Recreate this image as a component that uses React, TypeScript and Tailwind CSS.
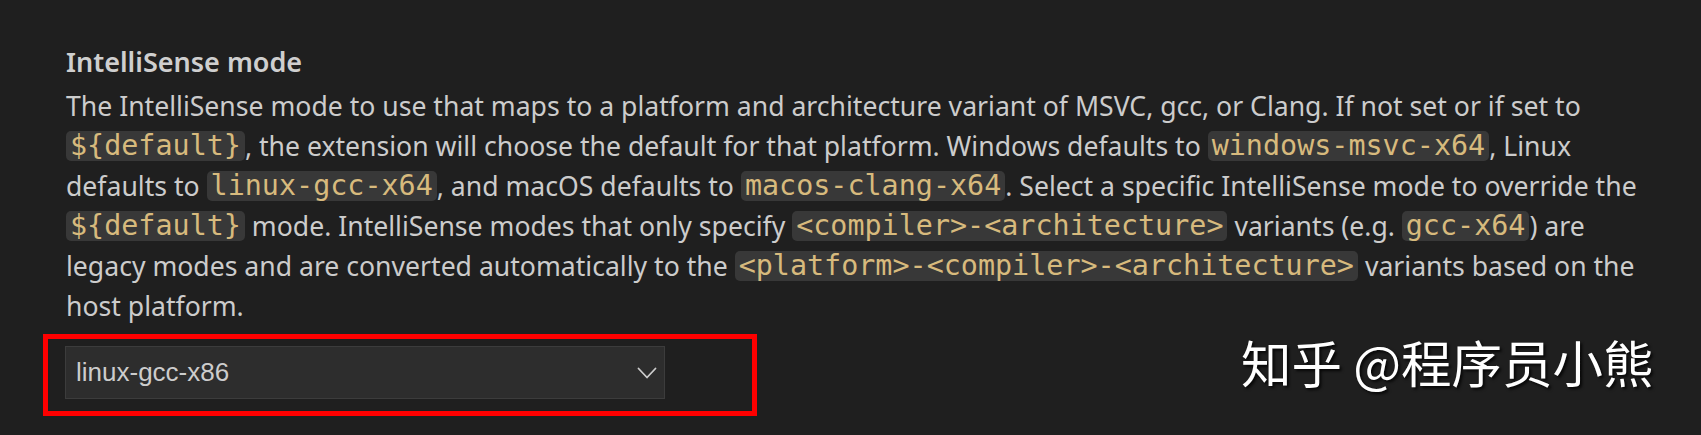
import React from 'react';

// Trozo de código en línea (estilo VS Code)
function Code({ children }: { children: React.ReactNode }) {
  return (
    <code className="inline-block rounded-[5px] bg-[#383838] px-[4px] leading-[30px] text-[#d7ba7d] font-['DejaVu_Sans_Mono',monospace] text-[28.4px] align-[1px]">
      {children}
    </code>
  );
}

export default function App() {
  return (
    <div className="relative w-[1701px] h-[435px] overflow-hidden bg-[#1f1f1f] text-[#cccccc] font-['Noto_Sans',sans-serif]">
      <div className="pl-[43px] pt-[42px]">
        <div className="ml-[23px] text-[27px] leading-[40px] font-semibold text-[#cfcfcf]">IntelliSense mode</div>
        <p className="ml-[23px] mt-[4px] text-[26.6px] leading-[40px] whitespace-nowrap">
          The IntelliSense mode to use that maps to a platform and architecture variant of MSVC, gcc, or Clang. If not set or if set to
          <br />
          <Code>{'${default}'}</Code>, the extension will choose the default for that platform. Windows defaults to <Code>windows-msvc-x64</Code>, Linux
          <br />
          defaults to <Code>linux-gcc-x64</Code>, and macOS defaults to <Code>macos-clang-x64</Code>. Select a specific IntelliSense mode to override the
          <br />
          <Code>{'${default}'}</Code> mode. IntelliSense modes that only specify <Code>{'<compiler>-<architecture>'}</Code> variants (e.g. <Code>gcc-x64</Code>) are
          <br />
          legacy modes and are converted automatically to the <Code>{'<platform>-<compiler>-<architecture>'}</Code> variants based on the
          <br />
          host platform.
        </p>

        {/* Recuadro rojo de anotación alrededor del selector */}
        <div className="mt-[8px] w-[714px] h-[82px] border-[5px] border-[#ff0000] pl-[17px] pt-[7px]">
          <div className="flex items-center justify-between w-[600px] h-[53px] bg-[#2d2d2d] border border-[#3c3c3c] pl-[10px] pr-[7px]">
            <span className="text-[26px] text-[#cccccc] font-['Liberation_Sans',Arial,sans-serif]">linux-gcc-x86</span>
            <svg width="20" height="12" viewBox="0 0 20 12" fill="none" stroke="#cccccc" strokeWidth="1.8" strokeLinecap="round" strokeLinejoin="round">
              <path d="M1.5 1.5l8.5 9 8.5-9" />
            </svg>
          </div>
        </div>
      </div>

      {/* Marca de agua */}
      <div className="absolute left-[1241px] top-[327px] text-[50.5px] leading-[68px] text-white font-['Noto_Sans_CJK_SC',sans-serif] [text-shadow:2px_2px_3px_rgba(0,0,0,0.8)]">
        知乎 @程序员小熊
      </div>
    </div>
  );
}
